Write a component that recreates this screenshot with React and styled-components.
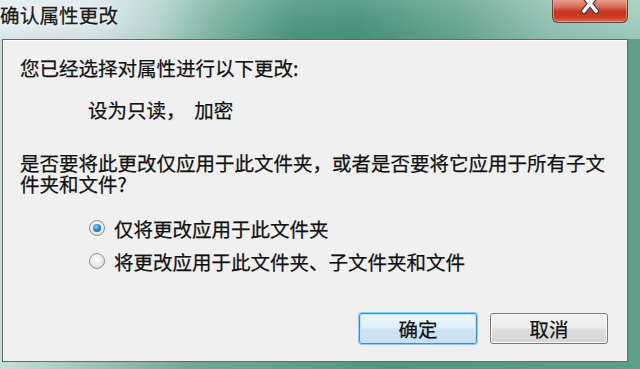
import React from 'react';
import styled, { createGlobalStyle } from 'styled-components';

const Global = createGlobalStyle`
  html, body { margin: 0; padding: 0; background: #5e9e8a; }
  body { font-family: "Noto Sans CJK SC", "Noto Sans", sans-serif; }
`;

const Window = styled.div`
  width: 640px;
  height: 369px;
  display: flex;
  flex-direction: column;
  overflow: hidden;
  background: linear-gradient(90deg, #c9dcdc 0%, #6fa998 30%, #4f9883 60%, #5e9e8a 100%);
`;

const TitleBar = styled.div`
  height: 39px;
  flex: none;
  display: flex;
  justify-content: space-between;
  align-items: flex-start;
  background:
    linear-gradient(180deg, rgba(255,255,255,0.12) 0%, rgba(255,255,255,0) 60%, rgba(0,0,0,0.04) 100%),
    linear-gradient(90deg, #e4eef2 0%, #dbe9ec 14%, #b9d6d2 24%, #7cb5a3 34%, #4f9883 46%, #4a947e 56%, #6aa893 72%, #93c3b5 86%, #a3ccc0 100%);
`;

const Title = styled.div`
  font-size: 19.5px;
  line-height: 24px;
  padding-top: 3px;
  color: #1a1a1a;
  letter-spacing: 0.2px;
  -webkit-text-stroke: 0.3px #1a1a1a;
  text-shadow: 0 0 6px rgba(255,255,255,0.9), 0 0 2px rgba(255,255,255,0.9);
`;

const CloseButton = styled.div`
  width: 76px;
  height: 24px;
  margin: -1px 12px 0 0;
  box-sizing: border-box;
  border: 1px solid #6d3d34;
  border-top: none;
  border-radius: 0 0 6px 6px;
  background: linear-gradient(180deg, #e9a593 0%, #d86a52 35%, #c4341c 55%, #cc3f26 80%, #e06a4f 100%);
  box-shadow: inset 0 0 0 1px rgba(255,255,255,0.35);
  display: flex;
  justify-content: center;
  align-items: flex-start;
`;

const Client = styled.div`
  flex: 1;
  margin: 0 12px 7px 2px;
  background: #f0f0f0;
  border: 1px solid #5f6b69;
  box-shadow: inset 1px 1px 0 #ffffff;
  display: flex;
  flex-direction: column;
  padding: 17px 19px 0 17px;
  color: #111;
  font-size: 19.5px;
  line-height: 21px;
  -webkit-text-stroke: 0.25px #111;
`;

const Line = styled.div`
  margin-left: ${p => p.$indent || 0}px;
  margin-top: ${p => p.$top || 0}px;
  white-space: pre;
`;

const Para = styled.div`
  margin-top: ${p => p.$top || 0}px;
  width: 596px;
`;

const RadioRow = styled.label`
  display: flex;
  align-items: center;
  gap: 9px;
  margin-left: 69px;
  margin-top: ${p => p.$top || 0}px;
  height: 22px;
`;

const RadioDot = styled.span`
  width: 16px;
  height: 16px;
  box-sizing: border-box;
  border-radius: 50%;
  border: 1px solid #8e8f8f;
  background: radial-gradient(circle at 50% 40%, #ffffff 0%, #e9e9e9 55%, #cfcfcf 100%);
  display: flex;
  align-items: center;
  justify-content: center;
  flex: none;

  &::after {
    content: '';
    display: ${p => (p.$checked ? 'block' : 'none')};
    width: 8px;
    height: 8px;
    border-radius: 50%;
    background: radial-gradient(circle at 40% 35%, #8fd4ff 0%, #2a86d0 45%, #0b4f91 100%);
  }
`;

const Buttons = styled.div`
  margin-top: auto;
  margin-bottom: 17px;
  display: flex;
  justify-content: flex-end;
  gap: 13px;
`;

const Button = styled.div`
  width: 118px;
  height: 31px;
  box-sizing: border-box;
  border-radius: 3px;
  display: flex;
  align-items: center;
  justify-content: center;
  font-size: 19.5px;
  color: #111;
  border: 1px solid ${p => (p.$primary ? '#3c8fd6' : '#7a7a7a')};
  background: ${p =>
    p.$primary
      ? 'linear-gradient(180deg, #eef6fc 0%, #e1eff9 48%, #cfe5f4 52%, #c6e0f2 100%)'
      : 'linear-gradient(180deg, #f4f4f4 0%, #ececec 48%, #dedede 52%, #d6d6d6 100%)'};
  box-shadow: ${p =>
    p.$primary
      ? '0 0 0 1px #8ccbf2, inset 0 0 0 1px #bfe3f8'
      : 'inset 0 0 0 1px #fbfbfb'};
`;

export default function App() {
  return (
    <>
      <Global />
      <Window>
        <TitleBar>
          <Title>确认属性更改</Title>
          <CloseButton>
            <svg width="22" height="16" viewBox="0 0 22 16">
              <path d="M5 -3 L17 12 M17 -3 L5 12" stroke="#3b3b3b" strokeWidth="6" strokeLinecap="round" />
              <path d="M5 -3 L17 12 M17 -3 L5 12" stroke="#ffffff" strokeWidth="3.6" strokeLinecap="round" />
            </svg>
          </CloseButton>
        </TitleBar>
        <Client>
          <Line>您已经选择对属性进行以下更改:</Line>
          <Line $indent={68} $top={21}>设为只读，  加密</Line>
          <Para $top={32}>是否要将此更改仅应用于此文件夹，或者是否要将它应用于所有子文件夹和文件?</Para>
          <RadioRow $top={23}>
            <RadioDot $checked />
            仅将更改应用于此文件夹
          </RadioRow>
          <RadioRow $top={11}>
            <RadioDot />
            将更改应用于此文件夹、子文件夹和文件
          </RadioRow>
          <Buttons>
            <Button $primary>确定</Button>
            <Button>取消</Button>
          </Buttons>
        </Client>
      </Window>
    </>
  );
}
